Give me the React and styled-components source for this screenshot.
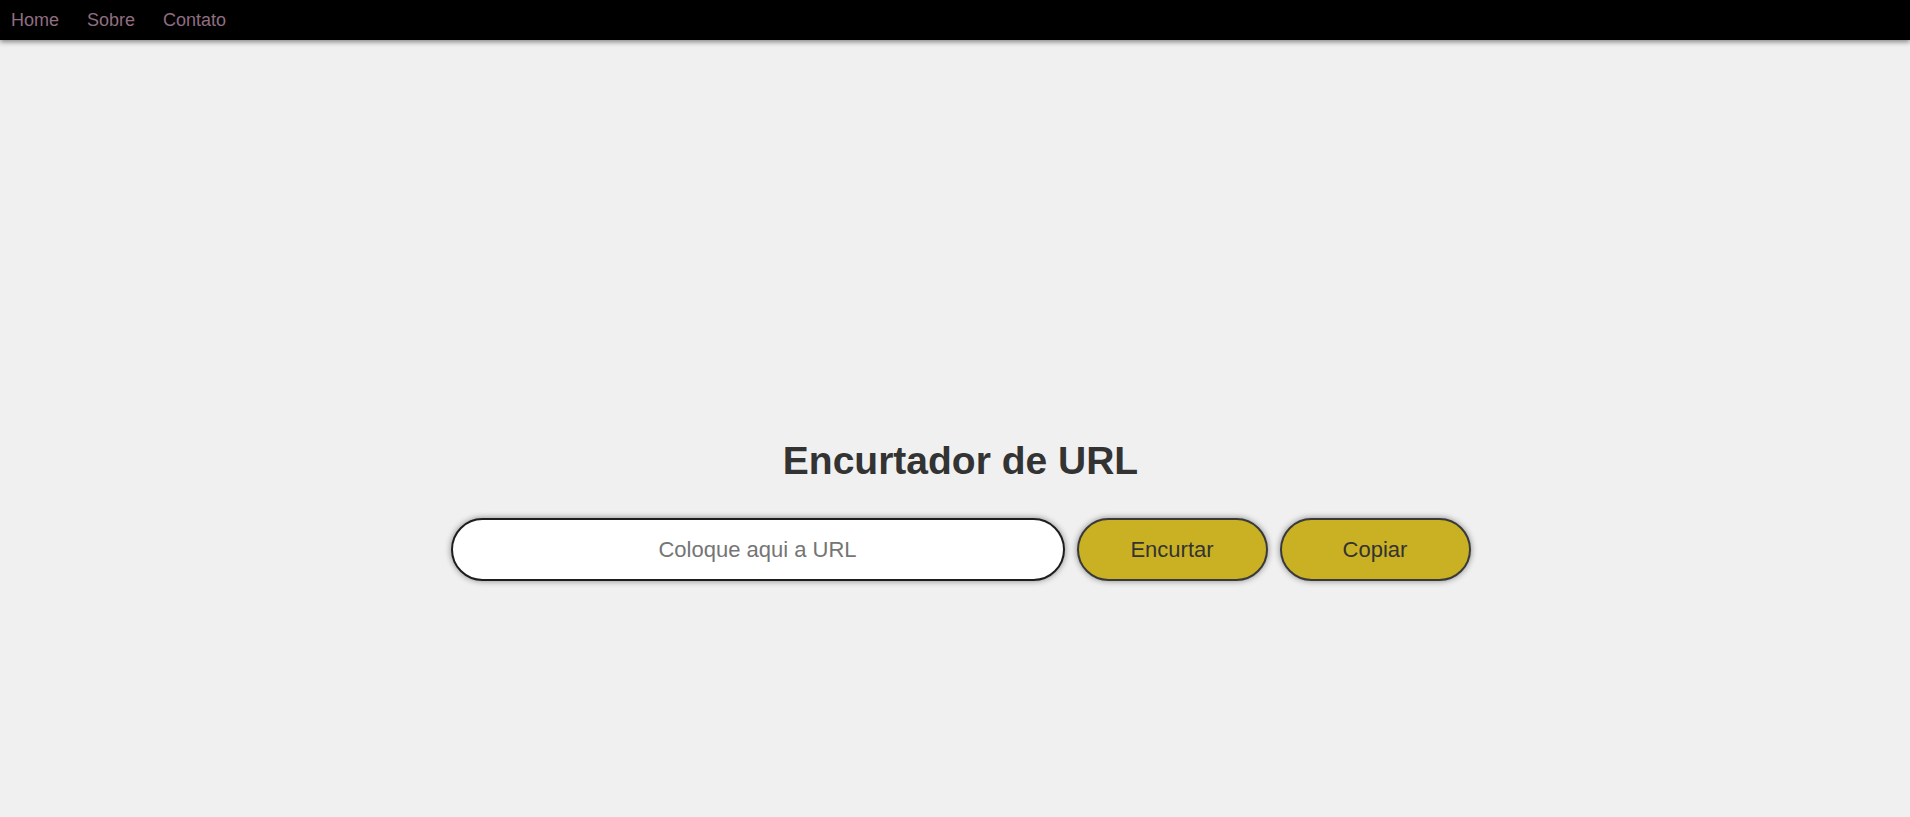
import styled, { createGlobalStyle } from "styled-components";

const GlobalStyle = createGlobalStyle`
  * {
    box-sizing: border-box;
  }

  body {
    margin: 0;
    background-color: #f0f0f0;
    font-family: "Liberation Sans", Arial, sans-serif;
  }
`;

const Page = styled.div`
  min-height: 100vh;
  display: flex;
  flex-direction: column;
`;

const Nav = styled.nav`
  height: 40px;
  background-color: #000;
  display: flex;
  align-items: center;
  padding-left: 11px;
  gap: 28px;
  box-shadow: 0 2px 5px rgba(0, 0, 0, 0.45);
`;

const NavLink = styled.a`
  color: #8f6e80;
  font-size: 18px;
  text-decoration: none;
  cursor: pointer;
`;

const Main = styled.main`
  display: flex;
  flex-direction: column;
  align-items: center;
  padding-top: 398px;
  padding-left: 11px;
`;

const Title = styled.h1`
  margin: 0 0 35px;
  font-size: 39px;
  line-height: 45px;
  font-weight: bold;
  color: #333;
`;

const Row = styled.div`
  display: flex;
  gap: 12px;
`;

const UrlInput = styled.input`
  width: 614px;
  height: 63px;
  border: 2px solid #1e1e1e;
  border-radius: 32px;
  background-color: #fff;
  box-shadow: 0 0 6px rgba(0, 0, 0, 0.45);
  font-family: inherit;
  font-size: 22px;
  text-align: center;
  outline: none;

  &::placeholder {
    color: #757575;
  }
`;

const Button = styled.button`
  width: 191px;
  height: 63px;
  border: 2px solid #3a3a3a;
  border-radius: 32px;
  background-color: #c9b123;
  box-shadow: 0 0 6px rgba(0, 0, 0, 0.45);
  color: #333;
  font-family: inherit;
  font-size: 22px;
  cursor: pointer;
`;

const App = () => {
  return (
    <Page>
      <GlobalStyle />
      <Nav>
        <NavLink>Home</NavLink>
        <NavLink>Sobre</NavLink>
        <NavLink>Contato</NavLink>
      </Nav>
      <Main>
        <Title>Encurtador de URL</Title>
        <Row>
          <UrlInput placeholder="Coloque aqui a URL" />
          <Button>Encurtar</Button>
          <Button>Copiar</Button>
        </Row>
      </Main>
    </Page>
  );
};

export default App;
